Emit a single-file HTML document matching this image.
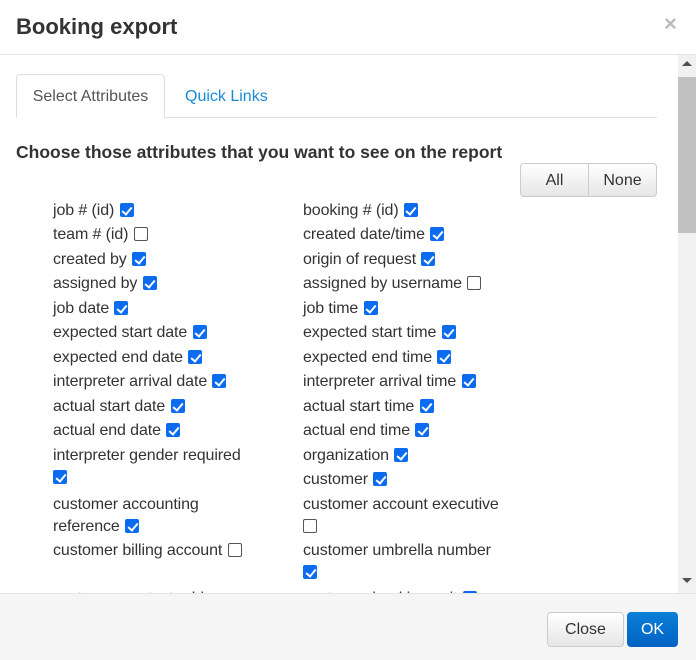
<!DOCTYPE html>
<html><head><style>
*{box-sizing:border-box}
body{margin:0;width:696px;height:660px;background:#fff;font-family:"Liberation Sans",Arial,sans-serif;color:#333;position:relative;overflow:hidden}
.hdr{position:absolute;left:0;top:0;width:696px;height:55px;border-bottom:1px solid #e5e5e5}
.hdr h1{position:absolute;left:16px;top:14px;margin:0;font-size:22px;font-weight:bold;color:#333}
.x{position:absolute;left:664px;top:11px;font-size:22px;color:#bbb;font-weight:bold}
.body{position:absolute;left:0;top:55px;width:678px;height:538px;overflow:hidden}
.sb{position:absolute;left:678px;top:55px;width:18px;height:538px;background:#f1f1f1}
.thumb{position:absolute;left:678px;top:77px;width:18px;height:156px;background:#c1c1c1}
.tabline{position:absolute;left:16px;top:62px;width:641px;border-top:1px solid #ddd}
.tab{position:absolute;left:16px;top:19px;width:149px;height:44px;border:1px solid #ddd;border-bottom:1px solid #fff;border-radius:4px 4px 0 0;background:#fff;font-size:16px;line-height:44px;text-align:center;color:#555}
.tab2{position:absolute;left:185px;top:20px;font-size:16px;line-height:44px;color:#1a8ad4}
h2{position:absolute;left:16px;top:87px;margin:0;font-size:17.5px;font-weight:bold;color:#333}
.btns{position:absolute;left:520px;top:108px;width:137px;height:34px;border:1px solid #ccc;border-radius:4px;background:linear-gradient(#fff,#e6e6e6);display:flex;font-size:16px}
.btns div{flex:1;text-align:center;line-height:33px}
.btns div+div{border-left:1px solid #ccc}
.it{position:absolute;font-size:16px;line-height:22px;color:#333;letter-spacing:-0.1px}
.l{left:53px;width:197px}.r{left:303px;width:206px}
.c{display:inline-block;width:14px;height:14px;border-radius:2px;vertical-align:-2px;margin-left:1px;position:relative}
.on{background:#0b6cf0}
.on:after{content:"";position:absolute;left:4.5px;top:1.5px;width:4px;height:8px;border:solid #fff;border-width:0 2px 2px 0;transform:rotate(40deg)}
.off{border:1px solid #555;background:#fff}
.ftr{position:absolute;left:0;top:593px;width:696px;height:67px;background:#f5f5f5;border-top:1px solid #e5e5e5}
.bc{position:absolute;left:547px;top:18px;width:77px;height:35px;border:1px solid #ccc;border-radius:4px;background:linear-gradient(#fff,#e6e6e6);font-size:16px;text-align:center;line-height:33px}
.bo{position:absolute;left:627px;top:18px;width:51px;height:35px;border-radius:4px;background:linear-gradient(#0b7fd6,#0062c4);color:#fff;font-size:16px;text-align:center;line-height:35px}
</style></head><body>
<div class="hdr"><h1>Booking export</h1><div class="x">×</div></div>
<div class="body">
<div class="tabline"></div>
<div class="tab">Select Attributes</div>
<div class="tab2">Quick Links</div>
<h2>Choose those attributes that you want to see on the report</h2>
<div class="btns"><div>All</div><div>None</div></div>

<div class="it l" style="top:145px">job # (id) <span class="c on"></span></div>
<div class="it r" style="top:145px">booking # (id) <span class="c on"></span></div>
<div class="it l" style="top:169px">team # (id) <span class="c off"></span></div>
<div class="it r" style="top:169px">created date/time <span class="c on"></span></div>
<div class="it l" style="top:194px">created by <span class="c on"></span></div>
<div class="it r" style="top:194px">origin of request <span class="c on"></span></div>
<div class="it l" style="top:218px">assigned by <span class="c on"></span></div>
<div class="it r" style="top:218px">assigned by username <span class="c off"></span></div>
<div class="it l" style="top:243px">job date <span class="c on"></span></div>
<div class="it r" style="top:243px">job time <span class="c on"></span></div>
<div class="it l" style="top:267px">expected start date <span class="c on"></span></div>
<div class="it r" style="top:267px">expected start time <span class="c on"></span></div>
<div class="it l" style="top:292px">expected end date <span class="c on"></span></div>
<div class="it r" style="top:292px">expected end time <span class="c on"></span></div>
<div class="it l" style="top:316px">interpreter arrival date <span class="c on"></span></div>
<div class="it r" style="top:316px">interpreter arrival time <span class="c on"></span></div>
<div class="it l" style="top:341px">actual start date <span class="c on"></span></div>
<div class="it r" style="top:341px">actual start time <span class="c on"></span></div>
<div class="it l" style="top:365px">actual end date <span class="c on"></span></div>
<div class="it r" style="top:365px">actual end time <span class="c on"></span></div>
<div class="it l" style="top:390px">interpreter gender required<br><span class="c on" style="margin-left:0"></span></div>
<div class="it r" style="top:390px">organization <span class="c on"></span></div>
<div class="it r" style="top:414px">customer <span class="c on"></span></div>
<div class="it l" style="top:439px">customer accounting<br>reference <span class="c on"></span></div>
<div class="it r" style="top:439px">customer account executive<br><span class="c off" style="margin-left:0"></span></div>
<div class="it l" style="top:485px">customer billing account <span class="c off"></span></div>
<div class="it r" style="top:485px">customer umbrella number<br><span class="c on" style="margin-left:0"></span></div>
<div class="it l" style="top:533px">customer contact address <span class="c off"></span></div>
<div class="it r" style="top:533px">customer booking unit <span class="c on"></span></div>
</div>
<div class="sb"></div><div class="thumb"></div>
<div style="position:absolute;left:682px;top:61px;border:5px solid transparent;border-bottom:5px solid #505050;border-top:0"></div>
<div style="position:absolute;left:682px;top:578px;border:5px solid transparent;border-top:5px solid #505050;border-bottom:0"></div>
<div class="ftr"><div class="bc">Close</div><div class="bo">OK</div></div>
</body></html>
